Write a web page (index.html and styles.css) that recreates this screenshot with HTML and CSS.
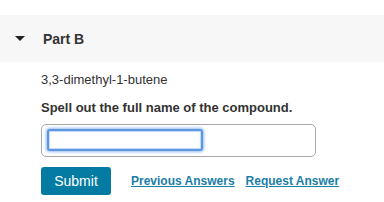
FILE: index.html
```html
<!DOCTYPE html>
<html lang="en">
<head>
    <meta charset="UTF-8">
    <meta name="viewport" content="width=device-width, initial-scale=1.0">
    <title>Part B</title>
    <link rel="stylesheet" href="styles.css">
</head>
<body>
    <div class="part">
        <div class="part-header">
            <span class="arrow"></span>
            <h2 class="part-title">Part B</h2>
        </div>

        <div class="part-body">
            <p class="prompt">3,3-dimethyl-1-butene</p>
            <p class="question">Spell out the full name of the compound.</p>

            <div class="answer-box">
                <input class="answer-input" type="text">
            </div>

            <div class="actions">
                <button class="submit-button">Submit</button>
                <a class="link" href="#">Previous Answers</a>
                <a class="link link-last" href="#">Request Answer</a>
            </div>
        </div>
    </div>
</body>
</html>
```

FILE: styles.css
```css
body {
    margin: 0;
    background-color: #ffffff;
    color: #333333;
    font-family: "Liberation Sans", Arial, sans-serif;
}
.part {
    margin-top: 15px;
}
.part-header {
    display: flex;
    align-items: center;
    height: 47px;
    padding-left: 15px;
    background-color: #f7f7f7;
}
.arrow {
    width: 0;
    height: 0;
    border-left: 5px solid transparent;
    border-right: 5px solid transparent;
    border-top: 5px solid #222222;
    margin-right: 18px;
}
.part-title {
    margin: 0;
    font-size: 14px;
    font-weight: bold;
    color: #333333;
}
.part-body {
    padding: 10px 0 0 41px;
}
.prompt, .question {
    margin: 0;
    font-size: 13px;
    line-height: 15px;
}
.question {
    margin-top: 13px;
    font-weight: bold;
}
.answer-box {
    box-sizing: border-box;
    width: 275px;
    height: 33px;
    margin-top: 9px;
    padding: 4px 5px;
    border: 1px solid #a8a8a8;
    border-radius: 5px;
}
.answer-input {
    box-sizing: border-box;
    display: block;
    width: 156px;
    height: 22px;
    margin: 0;
    padding: 0;
    border: 2px solid #5d97de;
    border-radius: 3px;
    box-shadow: 0 0 3px 1px rgba(77, 144, 230, 0.6), inset 0 0 1px 1px rgba(77, 144, 230, 0.35);
    outline: none;
}
.actions {
    display: flex;
    align-items: center;
    margin-top: 10px;
}
.submit-button {
    width: 70px;
    height: 28px;
    padding: 0;
    border: none;
    border-radius: 3px;
    background-color: #037ba3;
    color: #ffffff;
    font-family: "Liberation Sans", Arial, sans-serif;
    font-size: 14px;
    cursor: pointer;
}
.link {
    margin-left: 20px;
    font-size: 12px;
    font-weight: bold;
    color: #1a7ea6;
    text-decoration: underline;
}
.link-last {
    margin-left: 11px;
}
```
